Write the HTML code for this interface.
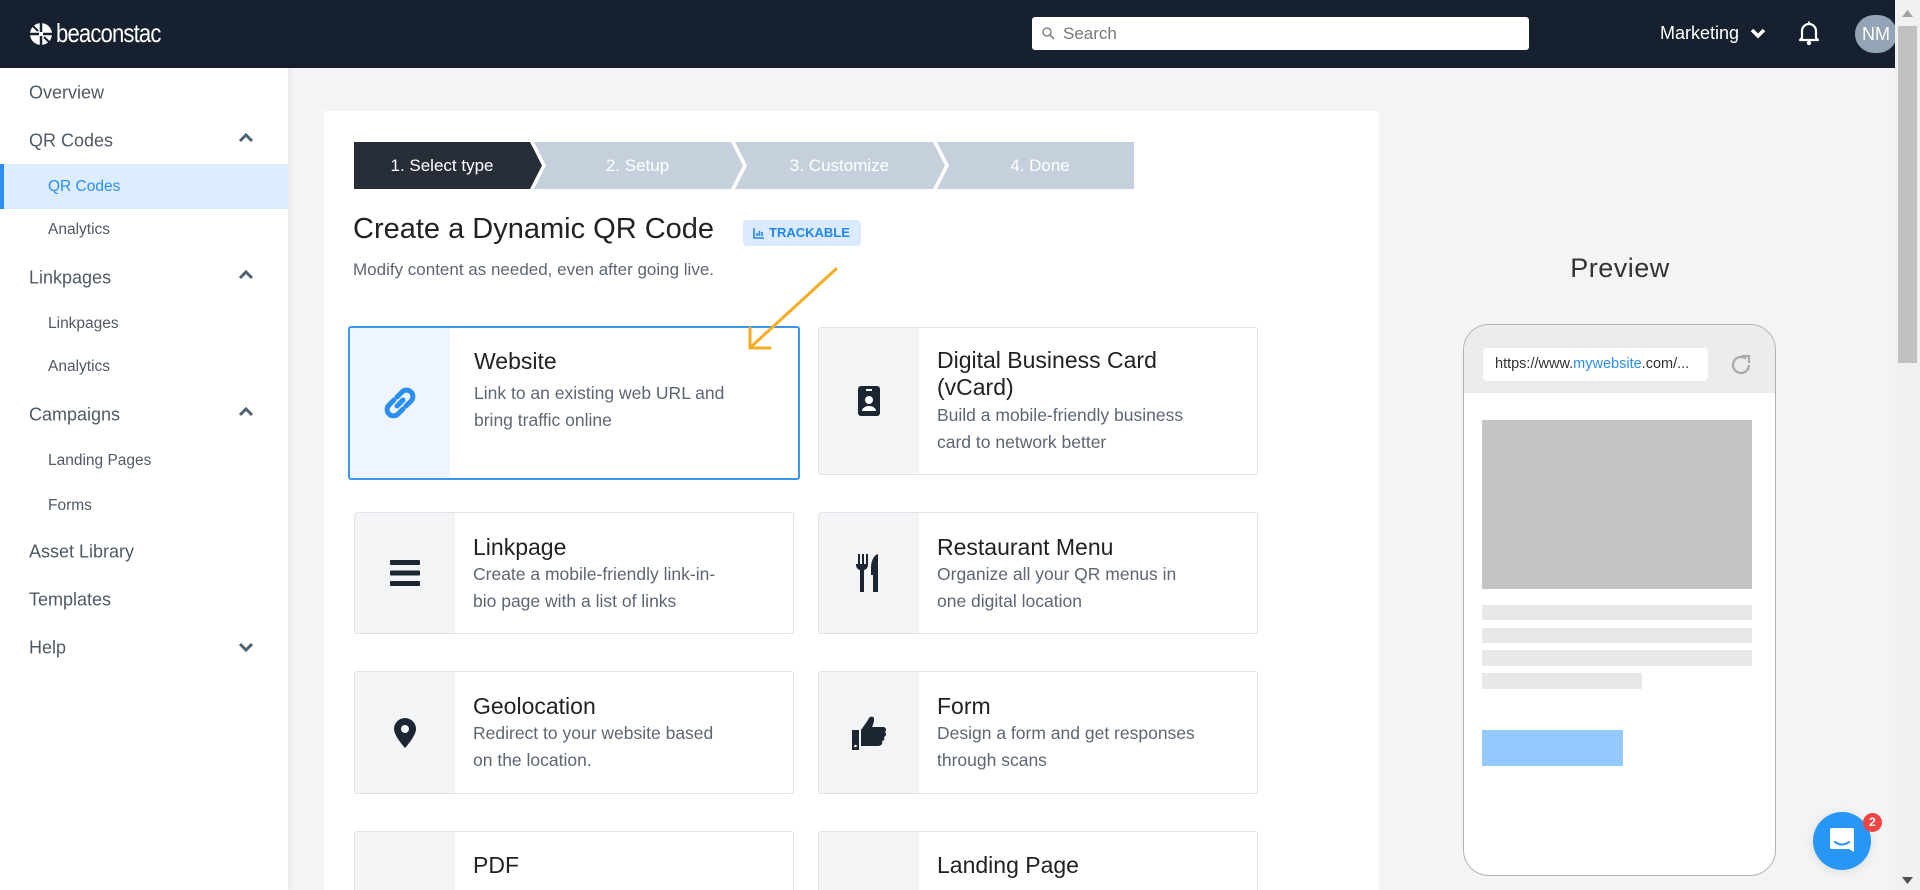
<!DOCTYPE html>
<html style="width:1920px;height:890px;overflow:hidden"><head><meta charset="utf-8"><style>
*{box-sizing:border-box;margin:0;padding:0}
body{width:1920px;height:890px;overflow:hidden;background:#f3f4f6;font-family:"Liberation Sans",sans-serif;position:relative}
.abs{position:absolute}
.hdr{left:0;top:0;width:1895px;height:68px;background:#17202e}
.side{left:0;top:68px;width:288px;height:822px;background:#fff;box-shadow:2px 0 6px rgba(0,0,0,.06)}
.si{position:absolute;left:29px;font-size:18px;color:#4f5a66;transform:translateY(-50%)}
.ss{position:absolute;left:48px;font-size:15.5px;color:#4f5a66;transform:translateY(-50%)}
.chev{position:absolute;left:238px;width:16px;height:10px}
.panel{left:324px;top:111px;width:1055px;height:779px;background:#fff}
.step{position:absolute;top:142px;height:47px;color:#fff;font-size:17px;line-height:47px;text-align:center}
.card{position:absolute;background:#fff;border:1px solid #dfe2e6;border-radius:3px;overflow:hidden}
.card .ic{position:absolute;left:0;top:0;bottom:0;width:100px;background:#f3f4f6;display:flex;align-items:center;justify-content:center}
.card .t{position:absolute;left:118px;font-size:23px;color:#222;line-height:27px}
.card .d{position:absolute;left:118px;font-size:17.5px;color:#5d6774;line-height:27px}
.sb{left:1895px;top:0;width:25px;height:890px;background:#f1f1f1}
</style></head><body>
<div class="abs hdr"></div>
<svg class="abs" style="left:29px;top:22px" width="24" height="24" viewBox="0 0 24 24"><circle cx="12" cy="12" r="11" fill="#fff"/><path d="M12 1v9M12 14v9M1 12h9M14 12h9" stroke="#17202e" stroke-width="2.5"/><path d="M4 4l5 5M15 15l5 5" stroke="#17202e" stroke-width="2"/></svg>
<div class="abs" style="left:56px;top:18px;color:#fff;font-size:26px;letter-spacing:-1px;transform:scaleX(.85);transform-origin:left">beaconstac</div>
<div class="abs" style="left:1032px;top:17px;width:497px;height:33px;background:#fff;border-radius:3px"></div>
<svg class="abs" style="left:1042px;top:27px" width="13" height="13" viewBox="0 0 13 13"><circle cx="5" cy="5" r="4" fill="none" stroke="#888" stroke-width="1.6"/><path d="M8 8l4 4" stroke="#888" stroke-width="1.8"/></svg>
<div class="abs" style="left:1063px;top:24px;font-size:17px;color:#777">Search</div>
<div class="abs" style="left:1660px;top:23px;font-size:18px;color:#fff">Marketing</div>
<svg class="abs" style="left:1750px;top:28px" width="16" height="12" viewBox="0 0 16 12"><path d="M2 2l6 6 6-6" fill="none" stroke="#fff" stroke-width="3.5"/></svg>
<svg class="abs" style="left:1797px;top:20px" width="24" height="26" viewBox="0 0 24 26"><path d="M5 18V11a7 7 0 0 1 14 0v7l2 2H3z" fill="none" stroke="#fff" stroke-width="2.2" stroke-linejoin="round"/><circle cx="12" cy="23" r="2.2" fill="#fff"/><rect x="11" y="1.5" width="2" height="3" fill="#fff"/></svg>
<div class="abs" style="left:1855px;top:15px;width:42px;height:38px;border-radius:19px;background:#93a5b5;color:#fff;font-size:18px;line-height:38px;padding-left:7px">NM</div>

<div class="abs side">
<div class="si" style="top:25px">Overview</div>
<div class="si" style="top:73px">QR Codes</div>
<svg class="chev" style="top:65px" viewBox="0 0 16 10"><path d="M2 8l6-6 6 6" fill="none" stroke="#4f6275" stroke-width="3"/></svg>
<div style="position:absolute;left:0;top:96px;width:288px;height:45px;background:#dcedfd;border-left:4px solid #2b8ff0"></div>
<div class="ss" style="top:119px;color:#2b8ff0">QR Codes</div>
<div class="ss" style="top:162px">Analytics</div>
<div class="si" style="top:210px">Linkpages</div>
<svg class="chev" style="top:202px" viewBox="0 0 16 10"><path d="M2 8l6-6 6 6" fill="none" stroke="#4f6275" stroke-width="3"/></svg>
<div class="ss" style="top:256px">Linkpages</div>
<div class="ss" style="top:299px">Analytics</div>
<div class="si" style="top:347px">Campaigns</div>
<svg class="chev" style="top:339px" viewBox="0 0 16 10"><path d="M2 8l6-6 6 6" fill="none" stroke="#4f6275" stroke-width="3"/></svg>
<div class="ss" style="top:393px">Landing Pages</div>
<div class="ss" style="top:438px">Forms</div>
<div class="si" style="top:484px">Asset Library</div>
<div class="si" style="top:532px">Templates</div>
<div class="si" style="top:580px">Help</div>
<svg class="chev" style="top:574px" viewBox="0 0 16 10"><path d="M2 2l6 6 6-6" fill="none" stroke="#4f6275" stroke-width="3"/></svg>
</div>

<div class="abs panel"></div>
<svg class="abs" style="left:354px;top:142px" width="780" height="47" viewBox="0 0 780 47">
<polygon points="0,0 176,0 188,23.5 176,47 0,47" fill="#272e38"/>
<polygon points="180,0 377,0 389,23.5 377,47 180,47 192,23.5" fill="#c5d0dc"/>
<polygon points="381,0 579,0 591,23.5 579,47 381,47 393,23.5" fill="#c5d0dc"/>
<polygon points="583,0 780,0 780,47 583,47 595,23.5" fill="#c5d0dc"/>
</svg>
<div class="step" style="left:354px;width:176px">1. Select type</div>
<div class="step" style="left:540px;width:195px">2. Setup</div>
<div class="step" style="left:742px;width:195px">3. Customize</div>
<div class="step" style="left:945px;width:190px">4. Done</div>

<div class="abs" style="left:353px;top:213px;font-size:29px;color:#222">Create a Dynamic QR Code</div>
<div class="abs" style="left:743px;top:220px;width:118px;height:26px;background:#dbeafe;border-radius:4px;color:#2188e8;font-size:13px;font-weight:bold;line-height:26px;padding-left:26px">TRACKABLE</div>
<svg class="abs" style="left:753px;top:227px" width="12" height="12" viewBox="0 0 12 12"><path d="M1 1v10h10M4 9V6M6.5 9V4M9 9V5" stroke="#2188e8" stroke-width="1.6" fill="none"/></svg>
<div class="abs" style="left:353px;top:260px;font-size:17px;color:#5d6774">Modify content as needed, even after going live.</div>

<div class="card" style="left:348px;top:326px;width:452px;height:154px;border:2px solid #3a96f0">
<div class="ic" style="background:#eef5ff"><svg width="40" height="40" viewBox="0 0 40 40"><g fill="none" stroke="#2b8ff0" stroke-width="5" stroke-linecap="round"><path d="M17 23l6-6"/><path d="M14 17l-5 5a6 6 0 0 0 9 9l5-5"/><path d="M26 23l5-5a6 6 0 0 0-9-9l-5 5"/></g></svg></div>
<div class="t" style="left:124px;top:20px">Website</div>
<div class="d" style="left:124px;top:52px">Link to an existing web URL and</div>
<div class="d" style="left:124px;top:79px">bring traffic online</div>
</div>
<div class="card" style="left:818px;top:327px;width:440px;height:148px">
<div class="ic"><svg width="24" height="32" viewBox="0 0 24 32"><rect x="1" y="1" width="22" height="30" rx="3" fill="#1c2633"/><rect x="9" y="4" width="6" height="2" fill="#fff"/><circle cx="12" cy="15" r="4" fill="#fff"/><path d="M5 26a7 5 0 0 1 14 0z" fill="#fff"/></svg></div>
<div class="t" style="top:19px">Digital Business Card</div>
<div class="t" style="top:46px">(vCard)</div>
<div class="d" style="top:74px">Build a mobile-friendly business</div>
<div class="d" style="top:101px">card to network better</div>
</div>

<svg class="abs" style="left:740px;top:262px;z-index:5" width="105" height="95" viewBox="0 0 105 95"><path d="M96 7L12 84" stroke="#f6ad22" stroke-width="3" stroke-linecap="round"/><path d="M10 66L10 86 30 86" fill="none" stroke="#f6ad22" stroke-width="3" stroke-linecap="round"/></svg>

<div class="card" style="left:354px;top:512px;width:440px;height:122px">
<div class="ic"><svg width="30" height="26" viewBox="0 0 30 26"><rect x="0" y="0" width="30" height="5" rx="1" fill="#1c2633"/><rect x="0" y="10.5" width="30" height="5" rx="1" fill="#1c2633"/><rect x="0" y="21" width="30" height="5" rx="1" fill="#1c2633"/></svg></div>
<div class="t" style="top:21px">Linkpage</div>
<div class="d" style="top:48px">Create a mobile-friendly link-in-</div>
<div class="d" style="top:75px">bio page with a list of links</div>
</div>
<div class="card" style="left:818px;top:512px;width:440px;height:122px">
<div class="ic"><svg width="30" height="40" viewBox="0 0 30 40"><path d="M2 1v11a5 5 0 0 0 4 5v22h4V17a5 5 0 0 0 4-5V1h-2v10h-2V1H8v10H6V1H4v10H2z" fill="#1c2633"/><path d="M19 39h5V1c-4 1-7 7-7 14v7h2z" fill="#1c2633"/></svg></div>
<div class="t" style="top:21px">Restaurant Menu</div>
<div class="d" style="top:48px">Organize all your QR menus in</div>
<div class="d" style="top:75px">one digital location</div>
</div>

<div class="card" style="left:354px;top:671px;width:440px;height:123px">
<div class="ic"><svg width="24" height="32" viewBox="0 0 24 32"><path d="M12 1a11 11 0 0 0-11 11c0 7 11 19 11 19s11-12 11-19A11 11 0 0 0 12 1z" fill="#1c2633"/><circle cx="12" cy="12" r="4" fill="#f3f4f6"/></svg></div>
<div class="t" style="top:21px">Geolocation</div>
<div class="d" style="top:48px">Redirect to your website based</div>
<div class="d" style="top:75px">on the location.</div>
</div>
<div class="card" style="left:818px;top:671px;width:440px;height:123px">
<div class="ic"><svg width="36" height="36" viewBox="0 0 36 36"><rect x="1" y="15" width="7" height="20" fill="#1c2633"/><path d="M10 15l7-10c1-3 3-4 5-3s1 6-1 10h11c3 0 4 3 2 5 2 2 1 4-1 5 1 2 0 4-2 4 1 3-1 5-4 5H10z" fill="#1c2633"/><circle cx="4.5" cy="31" r="1.3" fill="#fff"/></svg></div>
<div class="t" style="top:21px">Form</div>
<div class="d" style="top:48px">Design a form and get responses</div>
<div class="d" style="top:75px">through scans</div>
</div>

<div class="card" style="left:354px;top:831px;width:440px;height:70px"><div class="ic"></div><div class="t" style="top:20px">PDF</div></div>
<div class="card" style="left:818px;top:831px;width:440px;height:70px"><div class="ic"></div><div class="t" style="top:20px">Landing Page</div></div>

<div class="abs" style="left:1520px;top:253px;width:200px;text-align:center;font-size:27px;color:#333;letter-spacing:.5px">Preview</div>
<div class="abs" style="left:1463px;top:324px;width:313px;height:552px;border:1.5px solid #b3b3b3;border-radius:26px;background:#fff;overflow:hidden">
<div style="height:68px;background:#ececec;position:relative">
<div style="position:absolute;left:19px;top:23px;width:225px;height:33px;background:#fff;border-radius:4px;font-size:14.5px;color:#333;line-height:33px;padding-left:12px">https://www.<span style="color:#2b8ff0">mywebsite</span>.com/...</div>
<svg style="position:absolute;left:265px;top:28px" width="24" height="24" viewBox="0 0 24 24"><path d="M20 12a8 8 0 1 1-3-6.3" fill="none" stroke="#aaa" stroke-width="2.3"/><path d="M13 3h7v7" fill="none" stroke="#aaa" stroke-width="2.3"/></svg>
</div>
</div>
<div class="abs" style="left:1482px;top:420px;width:270px;height:169px;background:#c4c4c4"></div>
<div class="abs" style="left:1482px;top:605px;width:270px;height:15px;background:#e7e7e7"></div>
<div class="abs" style="left:1482px;top:628px;width:270px;height:15px;background:#e7e7e7"></div>
<div class="abs" style="left:1482px;top:650px;width:270px;height:16px;background:#e7e7e7"></div>
<div class="abs" style="left:1482px;top:673px;width:160px;height:16px;background:#e7e7e7"></div>
<div class="abs" style="left:1482px;top:730px;width:141px;height:36px;background:#93c9fe"></div>

<div class="abs" style="left:1813px;top:812px;width:58px;height:58px;border-radius:50%;background:#2896f5;box-shadow:0 2px 10px rgba(0,0,0,.1)"></div>
<svg class="abs" style="left:1828px;top:826px" width="28" height="28" viewBox="0 0 28 28"><path d="M4 2h20a2 2 0 0 1 2 2v22l-5-3H4a2 2 0 0 1-2-2V4a2 2 0 0 1 2-2z" fill="#fff"/><path d="M7 16q7 5 14 0" fill="none" stroke="#2896f5" stroke-width="2" stroke-linecap="round"/></svg>
<div class="abs" style="left:1863px;top:813px;width:19px;height:19px;border-radius:50%;background:#f04545;color:#fff;font-size:12px;font-weight:bold;text-align:center;line-height:19px">2</div>

<div class="abs sb"><div style="position:absolute;left:3px;top:26px;width:19px;height:337px;background:#c1c1c1"></div>
<svg style="position:absolute;left:7px;top:10px" width="11" height="7" viewBox="0 0 11 7"><path d="M0 7L5.5 0 11 7z" fill="#a3a3a3"/></svg>
<svg style="position:absolute;left:7px;top:877px" width="11" height="7" viewBox="0 0 11 7"><path d="M0 0L5.5 7 11 0z" fill="#505050"/></svg></div>
</body></html>
